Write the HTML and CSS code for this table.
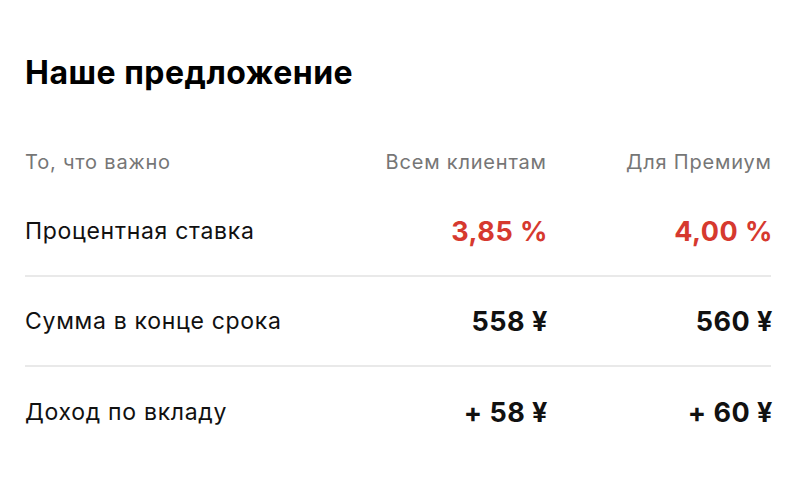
FILE: index.html
```html
<!DOCTYPE html>
<html lang="ru">
<head>
<meta charset="utf-8">
<link rel="stylesheet" href="styles.css">
</head>
<body>
<main class="offer">
  <h1 class="title">Наше предложение</h1>
  <div class="table">
    <div class="row head">
      <div class="cell label">То, что важно</div>
      <div class="cell num">Всем клиентам</div>
      <div class="cell num">Для Премиум</div>
    </div>
    <div class="row">
      <div class="cell label">Процентная ставка</div>
      <div class="cell num val red">3,85 %</div>
      <div class="cell num val red">4,00 %</div>
    </div>
    <div class="row">
      <div class="cell label">Сумма в конце срока</div>
      <div class="cell num val">558 ¥</div>
      <div class="cell num val">560 ¥</div>
    </div>
    <div class="row last">
      <div class="cell label">Доход по вкладу</div>
      <div class="cell num val">+ 58 ¥</div>
      <div class="cell num val">+ 60 ¥</div>
    </div>
  </div>
</main>
</body>
</html>
```

FILE: styles.css
```css
* { box-sizing: border-box; }
html, body { margin: 0; padding: 0; background: #fff; }
body {
  font-family: Inter, "Liberation Sans", Arial, sans-serif;
  color: #111;
}
.offer {
  width: 746px;
  margin-left: 25px;
  padding-top: 51px;
}
.title {
  margin: 0;
  font-size: 32px;
  line-height: 44px;
  font-weight: 700;
  letter-spacing: 0.5px;
  color: #000;
}
.table {
  margin-top: 42px;
}
.row {
  display: grid;
  grid-template-columns: 1fr 200px 225px;
  align-items: center;
  height: 90px;
  border-bottom: 2px solid #e9e9e9;
}
.row.head {
  height: 50px;
  border-bottom: none;
}
.row.last { border-bottom: none; }
.cell {
  font-size: 23px;
  letter-spacing: 0.7px;
}
.head .cell {
  font-size: 20px;
  letter-spacing: 0.8px;
  color: #767676;
}
.num { text-align: right; margin-right: -0.8px; }
.val {
  font-size: 27px;
  font-weight: 700;
  letter-spacing: 0.5px;
  margin-right: -2px;
  color: #111;
}
.val.red { color: #d6392f; }
```
